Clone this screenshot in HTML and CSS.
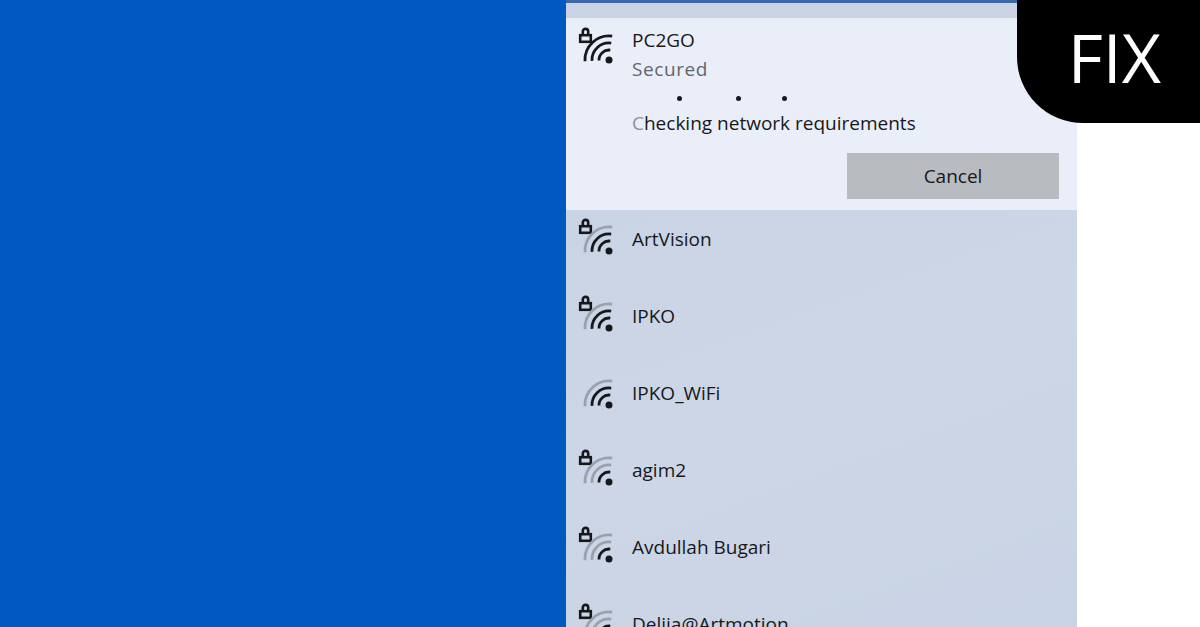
FILE: index.html
```html
<!DOCTYPE html>
<html lang="en">
<head>
    <meta charset="UTF-8">
    <meta name="viewport" content="width=device-width, initial-scale=1.0">
    <title>Checking network requirements</title>
    <link rel="stylesheet" href="styles.css">
</head>
<body>
    <svg class="defs" width="0" height="0" aria-hidden="true">
        <defs>
            <g id="lock">
                <rect x="4.2" y="8.2" width="10.6" height="6.6"></rect>
                <path d="M6.8 8V4.6a2.7 2.7 0 0 1 5.4 0V8"></path>
            </g>
            <path id="arc-outer" d="M9 34.2A24 24 0 0 1 36.2 9.2"></path>
            <path id="arc-middle" d="M16 33.9A17 17 0 0 1 35.2 16.1"></path>
            <path id="arc-inner" d="M23 33.5A10 10 0 0 1 34.3 23.1"></path>
        </defs>
    </svg>

    <div class="backdrop"></div>

    <div class="panel">
        <div class="strip"></div>

        <div class="selected">
            <div class="selected-head">
                <svg class="wifi wifi-selected" viewBox="0 0 40 40">
                    <use href="#lock" class="lock"></use>
                    <use href="#arc-outer" class="arc"></use>
                    <use href="#arc-middle" class="arc"></use>
                    <use href="#arc-inner" class="arc"></use>
                    <circle class="dot" cx="33" cy="33" r="3.5"></circle>
                </svg>
                <div class="selected-text">
                    <div class="name">PC2GO</div>
                    <div class="name status">Secured</div>
                    <div class="progress">
                        <span class="progress-dot"></span>
                        <span class="progress-dot"></span>
                        <span class="progress-dot"></span>
                    </div>
                    <div class="name"><span class="faded">C</span>hecking network requirements</div>
                </div>
            </div>
            <div class="actions">
                <button class="cancel">Cancel</button>
            </div>
        </div>

        <div class="network">
            <svg class="wifi" viewBox="0 0 40 40">
                <use href="#lock" class="lock"></use>
                <use href="#arc-outer" class="arc dim"></use>
                <use href="#arc-middle" class="arc"></use>
                <use href="#arc-inner" class="arc"></use>
                <circle class="dot" cx="33" cy="33" r="3.5"></circle>
            </svg>
            <div class="name">ArtVision</div>
        </div>

        <div class="network">
            <svg class="wifi" viewBox="0 0 40 40">
                <use href="#lock" class="lock"></use>
                <use href="#arc-outer" class="arc dim"></use>
                <use href="#arc-middle" class="arc"></use>
                <use href="#arc-inner" class="arc"></use>
                <circle class="dot" cx="33" cy="33" r="3.5"></circle>
            </svg>
            <div class="name">IPKO</div>
        </div>

        <div class="network">
            <svg class="wifi" viewBox="0 0 40 40">
                <use href="#arc-outer" class="arc dim"></use>
                <use href="#arc-middle" class="arc"></use>
                <use href="#arc-inner" class="arc"></use>
                <circle class="dot" cx="33" cy="33" r="3.5"></circle>
            </svg>
            <div class="name">IPKO_WiFi</div>
        </div>

        <div class="network">
            <svg class="wifi" viewBox="0 0 40 40">
                <use href="#lock" class="lock"></use>
                <use href="#arc-outer" class="arc dim"></use>
                <use href="#arc-middle" class="arc dim"></use>
                <use href="#arc-inner" class="arc"></use>
                <circle class="dot" cx="33" cy="33" r="3.5"></circle>
            </svg>
            <div class="name">agim2</div>
        </div>

        <div class="network">
            <svg class="wifi" viewBox="0 0 40 40">
                <use href="#lock" class="lock"></use>
                <use href="#arc-outer" class="arc dim"></use>
                <use href="#arc-middle" class="arc dim"></use>
                <use href="#arc-inner" class="arc"></use>
                <circle class="dot" cx="33" cy="33" r="3.5"></circle>
            </svg>
            <div class="name">Avdullah Bugari</div>
        </div>

        <div class="network">
            <svg class="wifi" viewBox="0 0 40 40">
                <use href="#lock" class="lock"></use>
                <use href="#arc-outer" class="arc dim"></use>
                <use href="#arc-middle" class="arc dim"></use>
                <use href="#arc-inner" class="arc"></use>
                <circle class="dot" cx="33" cy="33" r="3.5"></circle>
            </svg>
            <div class="name">Delija@Artmotion</div>
        </div>
    </div>

    <div class="badge">FIX</div>
</body>
</html>
```

FILE: styles.css
```css
body {
    font-family: 'Open Sans', 'Noto Sans', sans-serif;
    display: flex;
    height: 100vh;
    margin: 0;
    overflow: hidden;
    background: #fff;
    color: #16181c;
}

.defs {
    position: absolute;
}

.backdrop {
    width: 566px;
    background: #0058c1;
}

.panel {
    width: 511px;
    background: linear-gradient(160deg, #c6d2e5, #cdd6e6 60%, #c8d3e5);
}

.strip {
    height: 15px;
    border-top: 3px solid #3f66a8;
    background: #c9d3e3;
}

.selected {
    height: 192px;
    box-sizing: border-box;
    padding: 8px 18px 11px 10px;
    background: #eaeef8;
}

.selected-head {
    display: flex;
}

.wifi {
    flex: none;
    width: 40px;
    height: 40px;
    margin-right: 16px;
}

.wifi-selected {
    margin-top: 1px;
}

.lock {
    fill: none;
    stroke: #16181c;
    stroke-width: 2.6;
}

.arc {
    fill: none;
    stroke: #16181c;
    stroke-width: 2.8;
}

.arc.dim {
    stroke: #98a1ad;
}

.dot {
    fill: #16181c;
}

.name {
    font-size: 19px;
    line-height: 29px;
    white-space: nowrap;
}

.status {
    color: #62656b;
    letter-spacing: 0.6px;
}

.faded {
    color: #8f939a;
}

.progress {
    display: flex;
    height: 25px;
    padding: 12px 0 0 45px;
    box-sizing: border-box;
}

.progress-dot {
    width: 5px;
    height: 5px;
    border-radius: 50%;
    background: #16181c;
}

.progress-dot:nth-child(2) {
    margin-left: 54px;
}

.progress-dot:nth-child(3) {
    margin-left: 41px;
}

.actions {
    display: flex;
    justify-content: flex-end;
    margin-top: 15px;
}

.cancel {
    width: 212px;
    height: 46px;
    border: none;
    font-family: inherit;
    font-size: 19px;
    color: #16181c;
    background: #b8bbc0;
}

.network {
    display: flex;
    height: 77px;
    box-sizing: border-box;
    padding: 8px 0 0 10px;
}

.network .name {
    margin-top: 7px;
}

.badge {
    position: absolute;
    top: 0;
    right: 0;
    width: 183px;
    height: 123px;
    border-bottom-left-radius: 66px;
    background: #000;
    color: #fff;
    font-size: 68px;
    font-weight: 400;
    line-height: 114px;
    text-align: right;
    padding-right: 39px;
    box-sizing: border-box;
}
```
